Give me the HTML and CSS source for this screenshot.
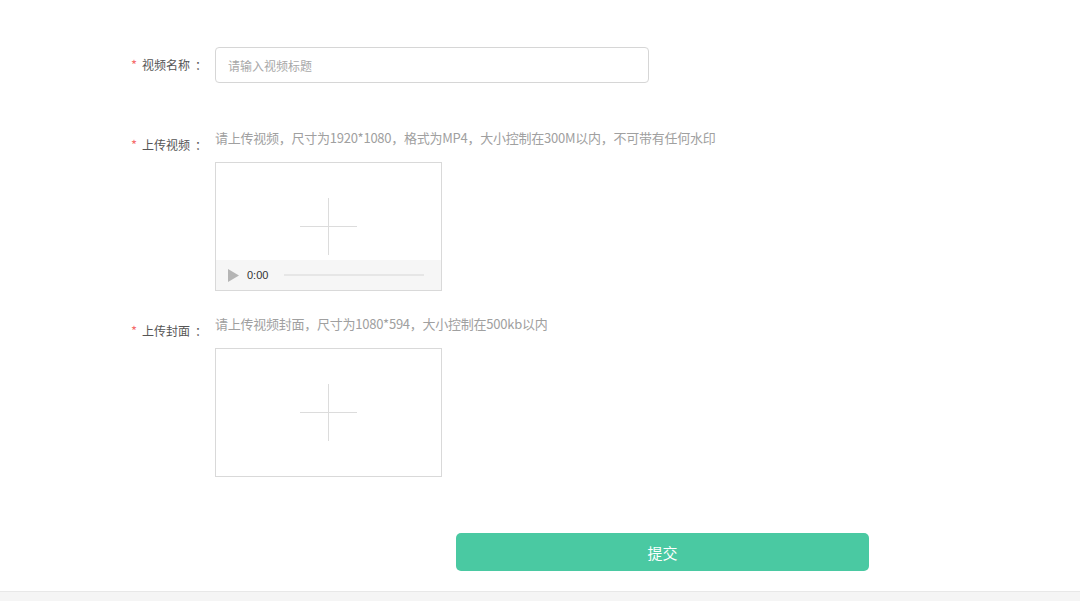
FILE: index.html
```html
<!DOCTYPE html>
<html lang="zh-CN">
<head>
  <meta charset="UTF-8">
  <meta name="viewport" content="width=device-width, initial-scale=1.0">
  <title>上传视频</title>
  <link rel="stylesheet" href="styles.css">
</head>
<body>
  <div class="page">
    <form class="upload-form">
      <div class="row row-name">
        <label class="label"><span class="req">*</span>视频名称<span class="colon">：</span></label>
        <div class="field">
          <input class="text-input" type="text" placeholder="请输入视频标题">
        </div>
      </div>

      <div class="row row-video">
        <label class="label"><span class="req">*</span>上传视频<span class="colon">：</span></label>
        <div class="field">
          <p class="hint">请上传视频，尺寸为1920*1080，格式为MP4，大小控制在300M以内，不可带有任何水印</p>
          <div class="upload-box">
            <span class="plus"></span>
            <div class="player-bar">
              <svg class="play" width="11" height="13" viewBox="0 0 11 13"><path d="M0 0 L11 6.5 L0 13 Z" fill="#b5b5b5"/></svg>
              <span class="time">0:00</span>
              <span class="track"></span>
            </div>
          </div>
        </div>
      </div>

      <div class="row row-cover">
        <label class="label"><span class="req">*</span>上传封面<span class="colon">：</span></label>
        <div class="field">
          <p class="hint">请上传视频封面，尺寸为1080*594，大小控制在500kb以内</p>
          <div class="upload-box">
            <span class="plus"></span>
          </div>
        </div>
      </div>

      <div class="actions">
        <button class="submit" type="button">提交</button>
      </div>
    </form>
  </div>
  <div class="footer"></div>
</body>
</html>
```

FILE: styles.css
```css
* { box-sizing: border-box; }
body { margin: 0; background: #fff; font-family: "Noto Sans CJK SC", "Liberation Sans", sans-serif; color: #555; }
.page { height: 591px; padding-top: 47px; }
.upload-form { width: 760px; }

.row { display: flex; }
.label { width: 215px; flex-shrink: 0; padding-right: 8px; text-align: right; font-size: 12px; color: #555; line-height: 16px; }
.req { color: #f56c6c; margin-right: 5px; font-size: 13px; }
.colon { margin-left: 5px; }
.field { flex: 1; }

.row-name .label { padding-top: 10px; }
.text-input { width: 434px; height: 36px; border: 1px solid #d6d6d6; border-radius: 4px; padding: 0 12px; font-size: 12px; font-family: inherit; color: #333; outline: none; }
.text-input::placeholder { color: #a8a8a8; }

.row-video { margin-top: 47px; }
.row-cover { margin-top: 25px; }
.row-video .label, .row-cover .label { padding-top: 7px; }
.hint { margin: 0; font-size: 13px; line-height: 16px; color: #a0a0a0; letter-spacing: -0.25px; }

/* upload area: plus sits in the middle, player controls lie over the bottom */
.upload-box { position: relative; width: 227px; height: 129px; margin-top: 16px; border: 1px solid #d9d9d9; display: flex; align-items: center; justify-content: center; }
.plus { position: relative; width: 57px; height: 57px; }
.plus::before, .plus::after { content: ""; position: absolute; background: #dcdcdc; }
.plus::before { left: 0; right: 0; top: 28px; height: 1px; }
.plus::after { top: 0; bottom: 0; left: 28px; width: 1px; }

.player-bar { position: absolute; left: 0; right: 0; bottom: 0; height: 30px; background: #f6f6f6; display: flex; align-items: center; padding-left: 12px; }
.play { margin-right: 8px; }
.time { font-size: 11px; color: #333; font-family: "Liberation Sans", sans-serif; }
.track { width: 140px; height: 2px; background: #e6e6e6; margin-left: 16px; }

.actions { margin-top: 56px; padding-left: 456px; }
.submit { width: 413px; height: 38px; border: 0; border-radius: 5px; background: #4ac9a2; color: #fff; font-size: 15px; font-family: inherit; }

.footer { height: 10px; background: #f5f5f5; border-top: 1px solid #e8e8e8; }
```
